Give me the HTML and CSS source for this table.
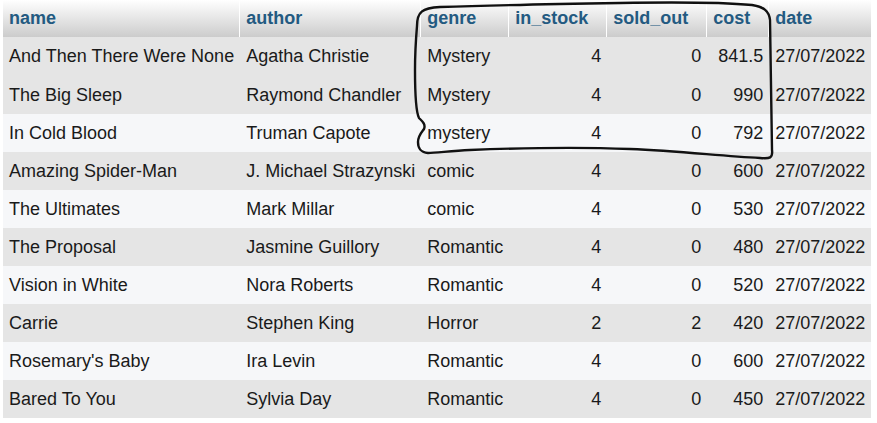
FILE: index.html
```html
<!DOCTYPE html>
<html>
<head>
<meta charset="utf-8">
<link rel="stylesheet" href="styles.css">
</head>
<body>
<div class="wrap">
<table class="data">
<thead>
<tr><th>name</th><th>author</th><th>genre</th><th>in_stock</th><th>sold_out</th><th>cost</th><th>date</th></tr>
</thead>
<tbody>
<tr class="even"><td>And Then There Were None</td><td>Agatha Christie</td><td>Mystery</td><td class="num">4</td><td class="num">0</td><td class="num">841.5</td><td>27/07/2022</td></tr>
<tr class="even"><td>The Big Sleep</td><td>Raymond Chandler</td><td>Mystery</td><td class="num">4</td><td class="num">0</td><td class="num">990</td><td>27/07/2022</td></tr>
<tr class="odd"><td>In Cold Blood</td><td>Truman Capote</td><td>mystery</td><td class="num">4</td><td class="num">0</td><td class="num">792</td><td>27/07/2022</td></tr>
<tr class="even"><td>Amazing Spider-Man</td><td>J. Michael Strazynski</td><td>comic</td><td class="num">4</td><td class="num">0</td><td class="num">600</td><td>27/07/2022</td></tr>
<tr class="odd"><td>The Ultimates</td><td>Mark Millar</td><td>comic</td><td class="num">4</td><td class="num">0</td><td class="num">530</td><td>27/07/2022</td></tr>
<tr class="even"><td>The Proposal</td><td>Jasmine Guillory</td><td>Romantic</td><td class="num">4</td><td class="num">0</td><td class="num">480</td><td>27/07/2022</td></tr>
<tr class="odd"><td>Vision in White</td><td>Nora Roberts</td><td>Romantic</td><td class="num">4</td><td class="num">0</td><td class="num">520</td><td>27/07/2022</td></tr>
<tr class="even"><td>Carrie</td><td>Stephen King</td><td>Horror</td><td class="num">2</td><td class="num">2</td><td class="num">420</td><td>27/07/2022</td></tr>
<tr class="odd"><td>Rosemary's Baby</td><td>Ira Levin</td><td>Romantic</td><td class="num">4</td><td class="num">0</td><td class="num">600</td><td>27/07/2022</td></tr>
<tr class="even"><td>Bared To You</td><td>Sylvia Day</td><td>Romantic</td><td class="num">4</td><td class="num">0</td><td class="num">450</td><td>27/07/2022</td></tr>
</tbody>
</table>
<svg class="scribble" width="877" height="423" viewBox="0 0 877 423" xmlns="http://www.w3.org/2000/svg">
<path d="M417,26 C417,12 422,8 440,7 C500,5 560,4 620,3 C680,2 730,3 752,5 C764,7 769,11 770,20 C771,60 771,110 772,150 C773,158 770,159 760,158 C720,156 680,151 630,149 C580,147 520,148 470,150 C450,151 436,153 428,153 C420,152 418,148 418,142 C418,136 421,133 424,129 C426,124 422,121 419,118 C416,112 415,90 415,70 C415,50 416,38 417,26 Z" fill="none" stroke="#111" stroke-width="2.4" stroke-linejoin="round"/>
</svg>
</div>
</body>
</html>
```
FILE: styles.css
```css
html, body {
  margin: 0;
  padding: 0;
  background: #fff;
}
body {
  font-family: "Liberation Sans", Arial, sans-serif;
  font-size: 18px;
  color: #1a1a1a;
}
.wrap {
  position: relative;
  width: 877px;
  height: 423px;
  overflow: hidden;
}
.data {
  border-collapse: collapse;
  border-spacing: 0;
  margin-left: 3px;
}
.data th {
  height: 37px;
  padding: 0 19px 0 6px;
  text-align: left;
  font-weight: bold;
  color: #235a81;
  background: linear-gradient(#ffffff, #cccccc);
  box-shadow: inset -1px 0 0 #fff;
  white-space: nowrap;
  vertical-align: middle;
}
.data th:last-child {
  box-shadow: none;
}
.data td {
  height: 38px;
  padding: 0 6px;
  white-space: nowrap;
  vertical-align: middle;
}
.data tbody tr:first-child td {
  height: 39px;
}
.data td.num {
  text-align: right;
}
.data tr.even td {
  background: #e5e5e5;
}
.data tr.odd td {
  background: #f6f7f9;
}
.scribble {
  position: absolute;
  left: 0;
  top: 0;
  pointer-events: none;
}
```
